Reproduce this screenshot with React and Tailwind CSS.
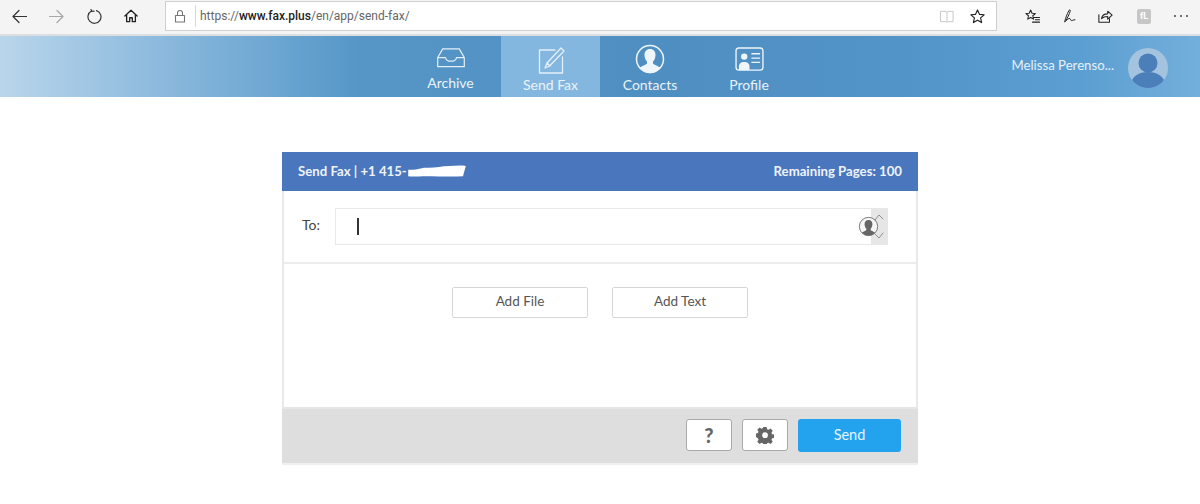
import React from "react";

const Stroke = ({ children, className = "", vb = "0 0 24 24", sw = 1.2 }) => (
  <svg viewBox={vb} fill="none" stroke="currentColor" strokeWidth={sw} strokeLinecap="round" strokeLinejoin="round" className={className}>
    {children}
  </svg>
);

function BrowserBar() {
  return (
    <div className="h-[36px] bg-[#f4f4f4] border-b-2 border-[#dcdfe1] flex items-start font-['Roboto',sans-serif] text-[#333]">
      <div className="w-[165px] h-[32px] flex items-center shrink-0 pl-[12px]">
        <Stroke className="w-[15px] h-[15px] text-[#333]" vb="0 0 15 15"><path d="M14.500 7.500H1M7 1.500 1 7.500l6 6" /></Stroke>
        <Stroke className="w-[15px] h-[15px] ml-[22px] text-[#a8a8a8]" vb="0 0 15 15"><path d="M.5 7.500H14M8 1.500l6 6-6 6" /></Stroke>
        <Stroke className="w-[15px] h-[15px] ml-[23px] text-[#333]" vb="0 0 15 15"><path d="M4.500 2a6.500 6.500 0 1 0 5-.400M4 .5 4.700 2.300l2.300-.200" /></Stroke>
        <Stroke className="w-[14px] h-[14px] ml-[22px] text-[#222]" vb="0 0 16 16" sw={1.5}><path d="M1 8 8 1.500 15 8M3 6.500V14.500h3.500V10h3v4.500H13V6.500" /></Stroke>
      </div>
      <div className="mt-px w-[832px] h-[30px] bg-white border border-[#cfcfcf] flex items-center shrink-0">
        <Stroke className="ml-[8px] w-[12px] h-[14px] text-[#777]" vb="0 0 12 14" sw={1.1}><path d="M1.500 6.500h9v6.500h-9zM3.500 6.500V4a2.500 2.500 0 0 1 5 0v2.500" /></Stroke>
        <div className="ml-[9px] w-px h-[22px] bg-[#d8d8d8]" />
        <span className="ml-[4px] text-[12px] text-[#666] leading-none">https://<b className="font-medium text-[#222]">www.fax.plus</b>/en/app/send-fax/</span>
        <div className="ml-auto flex items-center gap-[16px] pr-[11px]">
          <Stroke className="w-[14px] h-[15px] text-[#c4c4c4]" vb="0 0 15 15" sw={1}><path d="M1 2h5.500l1 1 1-1H14v11H8.500l-1 1-1-1H1zM7.500 3v10" /></Stroke>
          <Stroke className="w-[15px] h-[15px] text-[#222]" vb="0 0 16 16" sw={1.2}><path d="m8 1 2.100 4.700 5 .500-3.800 3.300 1.100 5L8 11.900l-4.400 2.600 1.100-5L.9 6.200l5-.500z" /></Stroke>
        </div>
      </div>
      <div className="flex-1 h-[32px] flex items-center pl-[28px]">
        <Stroke className="w-[15px] h-[15px] text-[#222]" vb="0 0 16 16" sw={1.1}><path d="m6 1 1.500 3.500 3.500.4-2.700 2.300.8 3.600L6 9l-3.100 1.800.8-3.600L1 4.900l3.500-.4zM9.500 9h6M11 11.500h4.500M8 14h7.500" /></Stroke>
        <Stroke className="w-[15px] h-[16px] ml-[23px] text-[#222]" vb="0 0 18 18" sw={1.2}><path d="M2 16C3 11 6 4 7.500 2c1-1 1.500 0 1 1.500C8 6 5 12 2.800 15.500c2-2 4-4 5.500-3.500 1 .5.500 2.500 2 2.500 1.200 0 2-1 4-1" /></Stroke>
        <Stroke className="w-[15px] h-[15px] ml-[20px] text-[#222]" vb="0 0 17 17" sw={1.2}><path d="M1 6.500V15h12v-4M4 11c.5-3.500 3-5.500 7-5.500V2.500L16 7l-5 4.500V8.500C8 8.500 6 9 4 11z" /></Stroke>
        <div className="w-[14px] h-[15px] ml-[24px] rounded-[2px] bg-[#c6c6c6] text-white text-[9px] font-bold flex items-center justify-center leading-none">fL</div>
        <div className="ml-[23px] flex gap-[4px]">
          <i className="w-[2px] h-[2px] rounded-full bg-[#444]" />
          <i className="w-[2px] h-[2px] rounded-full bg-[#444]" />
          <i className="w-[2px] h-[2px] rounded-full bg-[#444]" />
        </div>
      </div>
    </div>
  );
}

function NavItem({ label, active, width = "w-[100px]", labelClass = "mt-[1px]", children }) {
  return (
    <div className={`${width} h-full flex flex-col items-center pt-[8px] ${active ? "bg-[#84b7df]" : ""}`}>
      <div className="h-[30px] flex items-center justify-center">{children}</div>
      <span className={`${labelClass} text-[14px] leading-[20px] text-[#e9f3fa]`}>{label}</span>
    </div>
  );
}

function Nav() {
  return (
    <div className="h-[61px] grid grid-cols-[1fr_400px_1fr] font-['Lato',sans-serif] bg-[linear-gradient(90deg,#b9d6eb_0%,#8ab8dc_14%,#6fa8d3_22%,#5596c7_30%,#4f8ec1_55%,#5394c8_75%,#5b9ed1_90%,#74afdc_100%)]">
      <div />
      <div className="flex">
        <NavItem label="Archive" width="w-[101px]" labelClass="-mt-[1px]">
          <Stroke className="w-[30px] h-[22px] text-[#e4f0f9] -mt-[2px]" vb="0 0 32 24" sw={1.300}>
            <path d="M1.500 11.500 7 2h18l5.500 9.500V21.500H1.500zM1.500 11.500H10c.5 3 2 4 6 4s5.500-1 6-4h8.500" />
          </Stroke>
        </NavItem>
        <NavItem label="Send Fax" width="w-[99px]" active>
          <Stroke className="w-[28px] h-[28px] text-[#e4f0f9] mt-[2px]" vb="0 0 28 28" sw={1.300}>
            <path d="M18 4H2.500v23h23V11M8 22l2-5L24 2l3 3L12.500 20zM10 17l3 3" />
          </Stroke>
        </NavItem>
        <NavItem label="Contacts">
          <svg viewBox="0 0 30 30" className="w-[30px] h-[30px]">
            <circle cx="15" cy="15" r="13.500" fill="none" stroke="#eef6fb" strokeWidth="1.500" />
            <path fill="#eef6fb" d="M15 5c3.500 0 5.500 2.500 5.500 6 0 2.500-1 5-2.500 6.500v2c1 1.500 5.500 2.500 7.500 4.500a13.200 13.200 0 0 1-21 0c2-2 6.500-3 7.500-4.500v-2C10.500 16 9.500 13.500 9.500 11c0-3.500 2-6 5.500-6z" />
          </svg>
        </NavItem>
        <NavItem label="Profile" labelClass="mt-[1px] -ml-[2px]">
          <svg viewBox="0 0 30 26" className="w-[29px] h-[25px] -ml-[2px]">
            <rect x="1" y="1" width="28" height="23" rx="3" fill="none" stroke="#eef6fb" strokeWidth="1.400" />
            <circle cx="9.500" cy="10" r="3.300" fill="#eef6fb" />
            <path fill="#eef6fb" d="M4 24v-4c0-3 2.500-4.500 5.500-4.500S15 17 15 20v4z" />
            <path stroke="#eef6fb" strokeWidth="1.400" d="M17 7h9M17 11.500h9M17 16h9" />
          </svg>
        </NavItem>
      </div>
      <div className="flex items-start justify-end pr-[32px]">
        <span className="mt-[20px] mr-[14px] text-[13.200px] leading-[18px] text-[#e4f0f9]">Melissa Perenso...</span>
        <svg viewBox="0 0 40 40" className="w-[40px] h-[40px] mt-[12px]">
          <clipPath id="av"><circle cx="20" cy="20" r="20" /></clipPath>
          <circle cx="20" cy="20" r="20" fill="#a3c3de" />
          <g clipPath="url(#av)" fill="#4a7fba">
            <circle cx="20" cy="15" r="9.500" />
            <ellipse cx="20" cy="35" rx="16.500" ry="11" />
          </g>
        </svg>
      </div>
    </div>
  );
}

function Card() {
  return (
    <div className="w-[636px] mx-auto mt-[55px] font-['Lato',sans-serif] border-b-2 border-[#f0f0f0]">
      <div className="h-[39px] bg-[#4a76bd] flex items-center justify-between px-[16px] text-[13.200px] font-bold text-[#eef3fa]">
        <span className="flex items-center">
          Send Fax | +1 415-
          <svg viewBox="0 0 62 14" className="w-[62px] h-[13px] -ml-px">
            <path fill="#fff" d="M0 5c10 1 14-3 22-2 8 0 14-2 22-2 6 0 12-1 18 0l-3 11c-14 1-26 0-40 0-8 0-14 1-19 0z" />
          </svg>
        </span>
        <span>Remaining Pages: 100</span>
      </div>
      <div className="border-x-2 border-[#e9e9e9] bg-white">
        <div className="h-[73px] border-b-2 border-[#ececec] flex items-center">
          <span className="ml-[18px] w-[33px] text-[14px] text-[#444] -mt-[4px]">To:</span>
          <div className="w-[553px] h-[37px] border border-[#e8e8e8] flex items-center relative">
            <div className="ml-[21px] w-[2px] h-[17px] bg-[#333]" />
            <div className="ml-auto h-full w-[17px] bg-[#e6e6e6] -mr-px" />
            <svg viewBox="0 0 24 24" className="absolute right-[8px] top-[7px] w-[21px] h-[21px]">
              <circle cx="12" cy="12" r="10.500" fill="#f6f6f6" stroke="#777" strokeWidth="1.100" />
              <path fill="#666" d="M12 4.500c3 0 4.500 2 4.500 4.800 0 2-1 4-2 5.200v1.500c1 1 3.500 1.800 5 3a10 10 0 0 1-15 0c1.500-1.200 4-2 5-3v-1.500c-1-1.200-2-3.200-2-5.200 0-2.800 1.500-4.800 4.500-4.800z" />
            </svg>
            <Stroke className="absolute right-[3px] top-[5px] w-[10px] h-[7px] text-[#777]" vb="0 0 10 7" sw={0.8}><path d="M1 6l4-5 4 4" /></Stroke>
            <Stroke className="absolute right-[3px] bottom-[5px] w-[10px] h-[7px] text-[#777]" vb="0 0 10 7" sw={0.8}><path d="M1 2l4 4 4-5" /></Stroke>
          </div>
        </div>
        <div className="h-[143px] flex justify-center items-start gap-[24px] pt-[23px]">
          <button className="w-[136px] h-[31px] border border-[#d6d6d6] rounded-[2px] pb-[2px] text-[13.500px] text-[#555] bg-white">Add File</button>
          <button className="w-[136px] h-[31px] border border-[#d6d6d6] rounded-[2px] pb-[2px] text-[13.500px] text-[#555] bg-white">Add Text</button>
        </div>
      </div>
      <div className="h-[56px] bg-[#dedede] flex items-center justify-end gap-[10px] pr-[17px] pb-[2px] border-t-2 border-[#e6e6e6]">
        <button className="w-[46px] h-[32px] bg-white border border-[#a9a9a9] rounded-[3px] text-[#666] text-[20px] font-black leading-none">?</button>
        <button className="w-[46px] h-[32px] bg-white border border-[#a9a9a9] rounded-[3px] flex items-center justify-center">
          <svg viewBox="0 0 20 20" className="w-[18px] h-[18px]">
            <path fill="#666" fillRule="evenodd" d="M8.200 1h3.600l.5 2.500 1.600.7 2.200-1.400 2.500 2.500-1.400 2.200.7 1.600 2.500.5v3.600l-2.500.5-.7 1.600 1.400 2.200-2.500 2.500-2.200-1.400-1.600.7-.5 2.500H8.200l-.5-2.500-1.600-.7-2.200 1.400-2.500-2.500 1.400-2.200-.7-1.600L-.4 12V8.400l2.500-.5.7-1.600-1.400-2.200 2.500-2.500 2.200 1.400 1.600-.7zM10 7a3.200 3.200 0 1 0 0 6.400A3.200 3.200 0 0 0 10 7z" />
          </svg>
        </button>
        <button className="w-[103px] h-[33px] bg-[#23a3ee] rounded-[3px] text-[14.500px] text-[#e6f5fe]">Send</button>
      </div>
    </div>
  );
}

export default function App() {
  return (
    <div className="w-[1200px] h-[504px] bg-white overflow-hidden">
      <BrowserBar />
      <Nav />
      <Card />
    </div>
  );
}
